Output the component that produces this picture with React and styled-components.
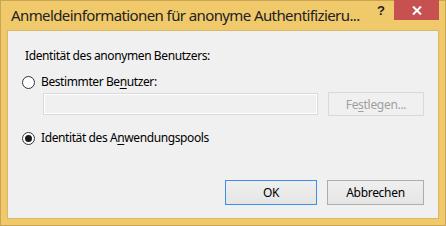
import styled, { createGlobalStyle } from "styled-components"

const Global = createGlobalStyle`
  html, body { margin: 0; padding: 0; background: #ffffff; }
  body { font-family: "Noto Sans", "Open Sans", sans-serif; }
`

const App = () => {
  return (
    <>
      <Global />
      <Window>
        <TitleBar>
          <Title>Anmeldeinformationen für anonyme Authentifizieru...</Title>
          <HelpButton>?</HelpButton>
          <CloseButton>
            <svg width="10" height="9" viewBox="0 0 10 9">
              <path d="M1 0.5 L9 8.5 M9 0.5 L1 8.5" stroke="#ffffff" strokeWidth="2" />
            </svg>
          </CloseButton>
        </TitleBar>
        <Client>
          <Heading>Identität des anonymen Benutzers:</Heading>
          <RadioRow $top={10}>
            <Radio />
            <span>Bestimmter Be<u>n</u>utzer:</span>
          </RadioRow>
          <UserRow>
            <TextBox />
            <Button disabled>Fe<u>s</u>tlegen...</Button>
          </UserRow>
          <RadioRow $top={14}>
            <Radio $checked />
            <span>Identität des A<u>n</u>wendungspools</span>
          </RadioRow>
          <Footer>
            <Button $default $width={92}>OK</Button>
            <Button $width={97}>Abbrechen</Button>
          </Footer>
        </Client>
      </Window>
    </>
  )
}

export default App

const Window = styled.div`
  width: 446px;
  height: 226px;
  box-sizing: border-box;
  border: 1px solid #c9a456;
  background: #f0c96b;
  display: flex;
  flex-direction: column;
`

const TitleBar = styled.div`
  height: 29px;
  display: flex;
  align-items: flex-start;
  padding-right: 6px;
`

const Title = styled.div`
  flex: 1;
  min-width: 0;
  padding: 4px 0 0 10px;
  font-size: 15px;
  color: #222222;
  white-space: nowrap;
  letter-spacing: -0.6px;
`

const HelpButton = styled.div`
  width: 26px;
  height: 20px;
  margin-top: -1px;
  display: flex;
  align-items: center;
  justify-content: center;
  font-family: "Liberation Sans", sans-serif;
  font-weight: bold;
  font-size: 13px;
  color: #222222;
`

const CloseButton = styled.div`
  width: 45px;
  height: 20px;
  margin-top: -1px;
  background: #c75050;
  display: flex;
  align-items: center;
  justify-content: center;
`

const Client = styled.div`
  flex: 1;
  margin: 0 6px 6px;
  border: 1px solid #d9b86a;
  background: #f0f0f0;
  display: flex;
  flex-direction: column;
  padding: 0 14px 0 14px;
  font-size: 12px;
  letter-spacing: -0.4px;
  color: #000000;
`

const Heading = styled.div`
  margin: 17px 0 0 3px;
  line-height: 16px;
`

const RadioRow = styled.div`
  display: flex;
  align-items: center;
  gap: 6px;
  margin-top: ${(p) => p.$top}px;
  line-height: 16px;

  u { text-decoration-thickness: 1px; text-underline-offset: 2px; }
`

const Radio = styled.span`
  width: 11px;
  height: 11px;
  border-radius: 50%;
  border: 1px solid #333333;
  background: #ffffff;
  position: relative;

  &::after {
    content: "";
    display: ${(p) => (p.$checked ? "block" : "none")};
    position: absolute;
    left: 2px;
    top: 2px;
    width: 7px;
    height: 7px;
    border-radius: 50%;
    background: #1a1a1a;
  }
`

const UserRow = styled.div`
  display: flex;
  align-items: center;
  justify-content: space-between;
  margin: 2px 0 0 21px;
`

const TextBox = styled.div`
  width: 275px;
  height: 22px;
  box-sizing: border-box;
  border: 1px solid #dadada;
  box-shadow: inset 0 0 0 1px #ffffff;
  background: #f0f0f0;
`

const Button = styled.button`
  width: ${(p) => p.$width || 96}px;
  height: 25px;
  box-sizing: border-box;
  border: 1px solid ${(p) => (p.$default ? "#3c8ee6" : "#adadad")};
  background: linear-gradient(#efefef, #e5e5e5);
  font-family: "Noto Sans", "Open Sans", sans-serif;
  font-size: 12px;
  letter-spacing: -0.3px;
  color: #000000;
  padding: 0;

  &:disabled {
    height: 24px;
    border-color: #d9d9d9;
    background: #f0f0f0;
    color: #a0a0a0;
  }

  u { text-decoration-thickness: 1px; text-underline-offset: 2px; }
`

const Footer = styled.div`
  margin-top: auto;
  margin-bottom: 13px;
  display: flex;
  justify-content: flex-end;
  gap: 10px;
`
